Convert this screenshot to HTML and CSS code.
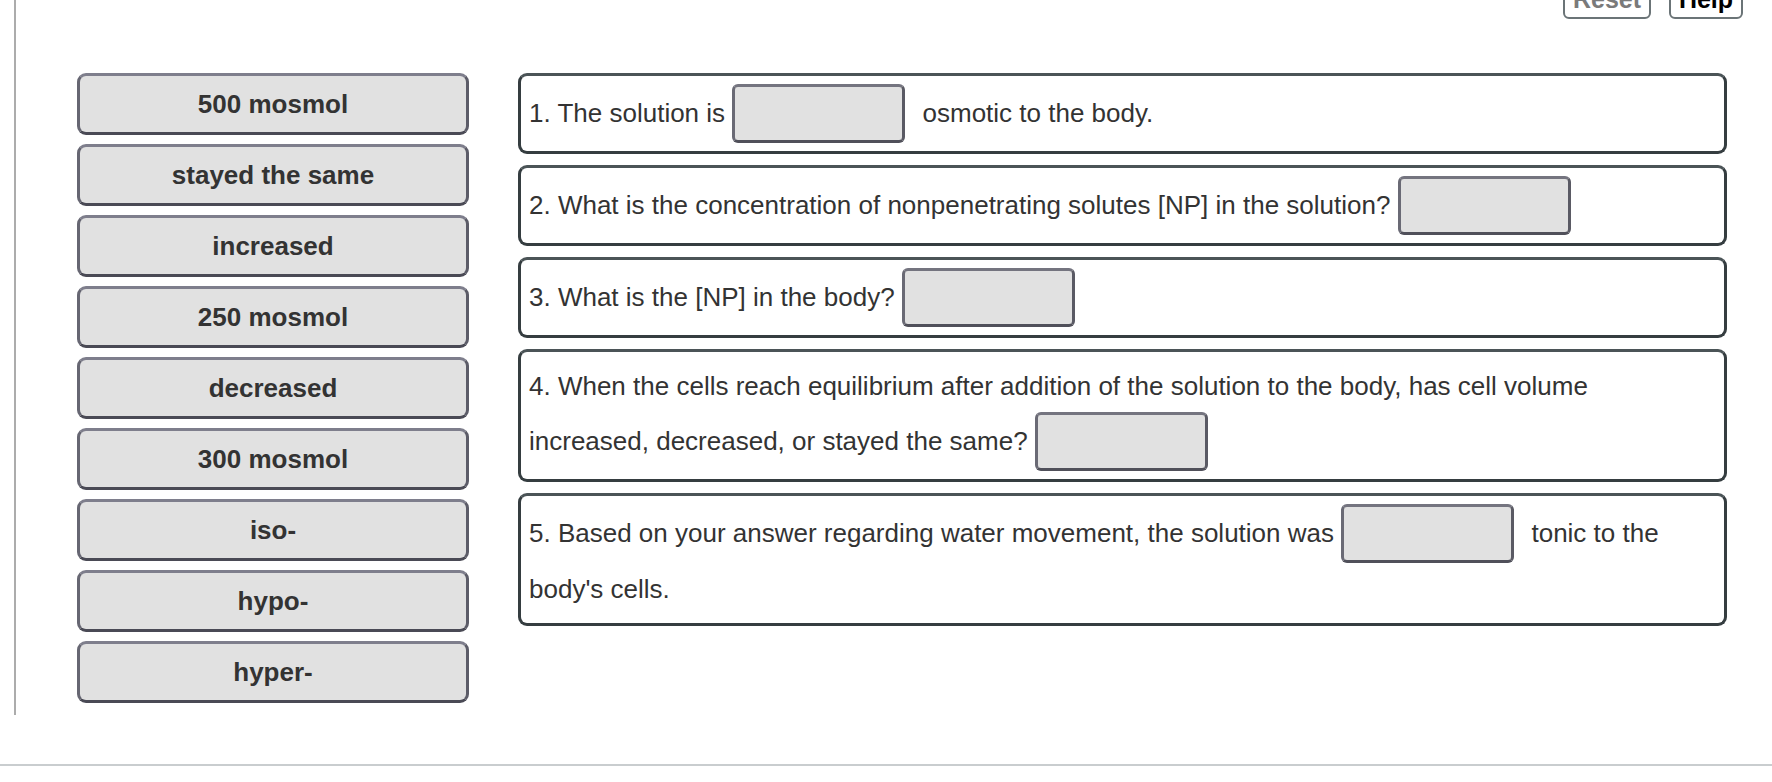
FILE: index.html
```html
<!DOCTYPE html>
<html>
<head>
<meta charset="utf-8">
<link rel="stylesheet" href="styles.css">
</head>
<body>
<div class="panel">
  <div class="toolbar">
    <button class="btn btn-reset btn-disabled">Reset</button>
    <button class="btn btn-help">Help</button>
  </div>
  <div class="content">
    <div class="tiles">
      <div class="tile">500 mosmol</div>
      <div class="tile">stayed the same</div>
      <div class="tile">increased</div>
      <div class="tile">250 mosmol</div>
      <div class="tile">decreased</div>
      <div class="tile">300 mosmol</div>
      <div class="tile">iso-</div>
      <div class="tile">hypo-</div>
      <div class="tile">hyper-</div>
    </div>
    <div class="questions">
      <div class="q">1. The solution is <span class="blank"></span> osmotic to the body.</div>
      <div class="q">2. What is the concentration of nonpenetrating solutes [NP] in the solution? <span class="blank"></span></div>
      <div class="q">3. What is the [NP] in the body? <span class="blank"></span></div>
      <div class="q">4. When the cells reach equilibrium after addition of the solution to the body, has cell volume increased, decreased, or stayed the same? <span class="blank"></span></div>
      <div class="q">5. Based on your answer regarding water movement, the solution was <span class="blank"></span> tonic to the body's cells.</div>
    </div>
  </div>
</div>
<div class="rule"></div>
</body>
</html>
```

FILE: styles.css
```css
html, body {
  margin: 0;
  padding: 0;
  background: #ffffff;
  overflow: hidden;
}

body {
  font-family: "Liberation Sans", Arial, Helvetica, sans-serif;
  color: #333333;
  width: 1772px;
  height: 782px;
}

.panel {
  display: flow-root;
  margin-left: 14px;
  border-left: 2px solid #acacac;
  height: 715px;
  box-sizing: border-box;
}

.toolbar {
  display: flex;
  justify-content: flex-end;
  gap: 18px;
  margin-top: -21px;
  padding-right: 29px;
}

.btn {
  height: 40px;
  padding: 0;
  font-family: "Liberation Sans", Arial, Helvetica, sans-serif;
  font-size: 25px;
  font-weight: bold;
  line-height: 36px;
  text-align: center;
  color: #000000;
  background: #ffffff;
  border: 2px solid #6b7477;
  border-radius: 6px;
  box-sizing: border-box;
}

.btn-reset {
  width: 88px;
}

.btn-help {
  width: 74px;
}

.btn-disabled {
  color: #7a7a7a;
}

.content {
  display: flex;
  align-items: flex-start;
  margin-top: 54px;
}

.tiles {
  display: flex;
  flex-direction: column;
  gap: 9px;
  margin-left: 61px;
  width: 392px;
}

.tile {
  height: 62px;
  box-sizing: border-box;
  border: 3px solid;
  border-color: #7e7e8c #5c5c68 #4a4a55 #666672;
  border-radius: 9px;
  background: #e1e1e1;
  text-align: center;
  font-size: 26px;
  font-weight: bold;
  line-height: 56px;
  color: #333333;
}

.questions {
  display: flex;
  flex-direction: column;
  gap: 11px;
  margin-left: 49px;
  width: 1209px;
}

.q {
  border: 3px solid #353d40;
  border-top-color: #4b5457;
  border-radius: 9px;
  padding: 8px 30px 8px 8px;
  font-size: 26px;
  line-height: 52px;
  color: #333333;
  box-sizing: border-box;
}

.blank {
  display: inline-block;
  width: 173px;
  height: 59px;
  box-sizing: border-box;
  vertical-align: -21px;
  background: #e1e1e1;
  border: 3px solid;
  border-color: #74747f #5a5a64 #50505a #6a6a75;
  border-radius: 6px;
  margin-right: 10px;
}

.rule {
  margin-top: 49px;
  height: 2px;
  background: #c9cdcf;
}
```
